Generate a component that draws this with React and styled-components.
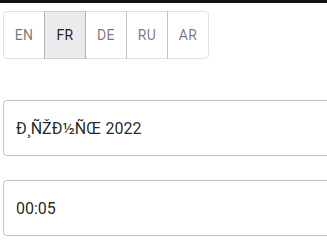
import React, { useState } from 'react';
import styled, { createGlobalStyle } from 'styled-components';

const GlobalStyle = createGlobalStyle`
  * { box-sizing: border-box; }
  body {
    margin: 0;
    background: #fff;
    font-family: Roboto, "Liberation Sans", Arial, sans-serif;
    overflow: hidden;
  }
`

const TopBar = styled.div`
  height: 3px;
  background: #111;
`

const Page = styled.div`
  display: flex;
  flex-direction: column;
  align-items: flex-start;
  padding: 8px 0 0 3px;
`

const ToggleGroup = styled.div`
  display: inline-flex;
  border-radius: 4px;
  margin-bottom: 41px;
`

const ToggleButton = styled.button`
  font-family: Roboto, "Liberation Sans", Arial, sans-serif;
  font-size: 14px;
  font-weight: 400;
  line-height: 1.75;
  letter-spacing: 0.02857em;
  text-transform: uppercase;
  padding: 0;
  height: 48px;
  width: 42px;
  border: 1px solid rgba(0, 0, 0, 0.12);
  margin-left: -1px;
  cursor: pointer;
  color: ${p => (p.$selected ? 'rgba(0, 0, 0, 0.87)' : 'rgba(0, 0, 0, 0.54)')};
  background: ${p => (p.$selected ? 'rgba(0, 0, 0, 0.08)' : 'transparent')};
  border-radius: 0;

  &:first-child {
    margin-left: 0;
    border-radius: 4px 0 0 4px;
  }
  &:last-child {
    border-radius: 0 4px 4px 0;
  }
`

const Field = styled.div`
  width: 360px;
  height: 56px;
  border: 1px solid rgba(0, 0, 0, 0.23);
  border-radius: 4px;
  display: flex;
  align-items: center;
  padding: 0 12px;
  margin-bottom: 24px;
`

const Input = styled.input`
  border: none;
  outline: none;
  background: transparent;
  width: 100%;
  font-family: Roboto, "Liberation Sans", Arial, sans-serif;
  font-size: 16px;
  color: rgba(0, 0, 0, 0.87);
  padding: 0;
`

const langs = ['EN', 'FR', 'DE', 'RU', 'AR'];

const App = () => {
  const [lang, setLang] = useState('FR');
  return (
    <>
      <GlobalStyle />
      <TopBar />
      <Page>
        <ToggleGroup>
          {langs.map(l => (
            <ToggleButton key={l} $selected={l === lang} onClick={() => setLang(l)}>
              {l}
            </ToggleButton>
          ))}
        </ToggleGroup>
        <Field>
          <Input defaultValue="Ð¸ÑŽÐ½ÑŒ 2022" />
        </Field>
        <Field>
          <Input defaultValue="00:05" />
        </Field>
      </Page>
    </>
  );
};

export default App;
